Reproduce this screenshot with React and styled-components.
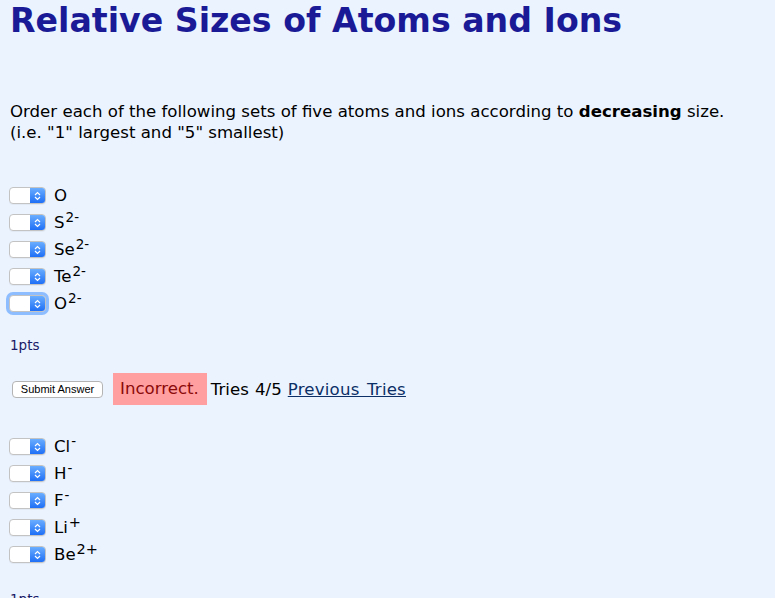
import React from "react";
import styled, { createGlobalStyle } from "styled-components";

const GlobalStyle = createGlobalStyle`
  html, body {
    margin: 0;
    padding: 0;
    background: #ebf3ff;
  }
  body {
    font-family: "DejaVu Sans", Verdana, sans-serif;
    color: #000;
  }
`;

const sets = [
  [
    { sym: "O" },
    { sym: "S", charge: "2-" },
    { sym: "Se", charge: "2-" },
    { sym: "Te", charge: "2-" },
    { sym: "O", charge: "2-", focused: true },
  ],
  [
    { sym: "Cl", charge: "-" },
    { sym: "H", charge: "-" },
    { sym: "F", charge: "-" },
    { sym: "Li", charge: "+" },
    { sym: "Be", charge: "2+" },
  ],
];

const Chevrons = () => (
  <svg width="7" height="10" viewBox="0 0 7 10">
    <path d="M1 4 L3.5 1.5 L6 4" fill="none" stroke="#fff" strokeWidth="1.2" />
    <path d="M1 6 L3.5 8.5 L6 6" fill="none" stroke="#fff" strokeWidth="1.2" />
  </svg>
);

const IonRows = ({ items, top }) => (
  <RowList $top={top}>
    {items.map((item, i) => (
      <Row key={i}>
        <Picker $focused={item.focused}>
          <PickerArrow>
            <Chevrons />
          </PickerArrow>
        </Picker>
        <Label>
          {item.sym}
          {item.charge && (
            <Charge $plus={item.charge.includes("+")}>{item.charge}</Charge>
          )}
        </Label>
      </Row>
    ))}
  </RowList>
);

const App = () => {
  return (
    <>
      <GlobalStyle />
      <Page>
        <Title>Relative Sizes of Atoms and Ions</Title>
        <Intro>
          Order each of the following sets of five atoms and ions according to{" "}
          <b>decreasing</b> size.
          <br />
          (i.e. "1" largest and "5" smallest)
        </Intro>

        <IonRows items={sets[0]} top="39px" />

        <Points>1pts</Points>

        <AnswerBar>
          <SubmitButton>Submit Answer</SubmitButton>
          <Verdict>Incorrect.</Verdict>
          <Tries>Tries 4/5</Tries>
          <TriesLink href="#">Previous Tries</TriesLink>
        </AnswerBar>

        <IonRows items={sets[1]} top="28px" />

        <Points $top="23px">1pts</Points>
      </Page>
    </>
  );
};

export default App;

const Page = styled.div`
  padding: 0 10px;
  height: 598px;
  overflow: hidden;
`;

const Title = styled.h1`
  margin: 1px 0 0;
  font-size: 33.2px;
  line-height: 40px;
  font-weight: bold;
  color: #1a1a96;
  white-space: nowrap;
`;

const Intro = styled.p`
  margin: 61px 0 0;
  font-size: 16.6px;
  line-height: 20.5px;

  b {
    font-weight: bold;
  }
`;

const RowList = styled.div`
  display: flex;
  flex-direction: column;
  margin-top: ${(p) => p.$top || "40px"};
`;

const Row = styled.div`
  display: flex;
  align-items: center;
  height: 27px;
`;

const Picker = styled.div`
  display: flex;
  justify-content: flex-end;
  width: 37px;
  height: 17px;
  margin-left: -1px;
  box-sizing: border-box;
  border: 1px solid #c3c3c3;
  border-radius: 4px;
  background: #fff;
  overflow: hidden;
  box-shadow: ${(p) =>
    p.$focused ? "0 0 0 3px rgba(90, 160, 255, 0.65)" : "0 1px 0 rgba(0,0,0,0.04)"};
`;

const PickerArrow = styled.div`
  display: flex;
  align-items: center;
  justify-content: center;
  width: 15px;
  background: linear-gradient(#6aaeff, #1f6ff6);
`;

const Label = styled.span`
  margin-left: 8px;
  font-size: 16.6px;
  line-height: 20px;
`;

const Charge = styled.sup`
  font-size: ${(p) => (p.$plus ? "14.5px" : "13.5px")};
  line-height: 0;
  vertical-align: 6px;
  margin-left: 1px;
`;

const Points = styled.div`
  margin-top: ${(p) => p.$top || "20px"};
  font-size: 13.5px;
  line-height: 16px;
  color: #1a1a66;
`;

const AnswerBar = styled.div`
  display: flex;
  align-items: center;
  margin-top: 20px;
  font-size: 16.6px;
  white-space: nowrap;
`;

const SubmitButton = styled.button`
  margin-left: 2px;
  width: 91px;
  height: 17px;
  padding: 0;
  font-family: "Liberation Sans", Arial, sans-serif;
  font-size: 11px;
  color: #000;
  background: #fff;
  border: 1px solid #b4b4b4;
  border-radius: 4px;
`;

const Verdict = styled.span`
  margin-left: 10px;
  padding: 6px 8px 6px 7px;
  line-height: 20px;
  background: #ff9f9f;
  color: #8b0a0a;
`;

const Tries = styled.span`
  margin-left: 4px;
  margin-right: 6px;
  word-spacing: 1px;
`;

const TriesLink = styled.a`
  color: #0b2f66;
  text-decoration: underline;
  letter-spacing: 0.2px;
  word-spacing: 2px;
`;
